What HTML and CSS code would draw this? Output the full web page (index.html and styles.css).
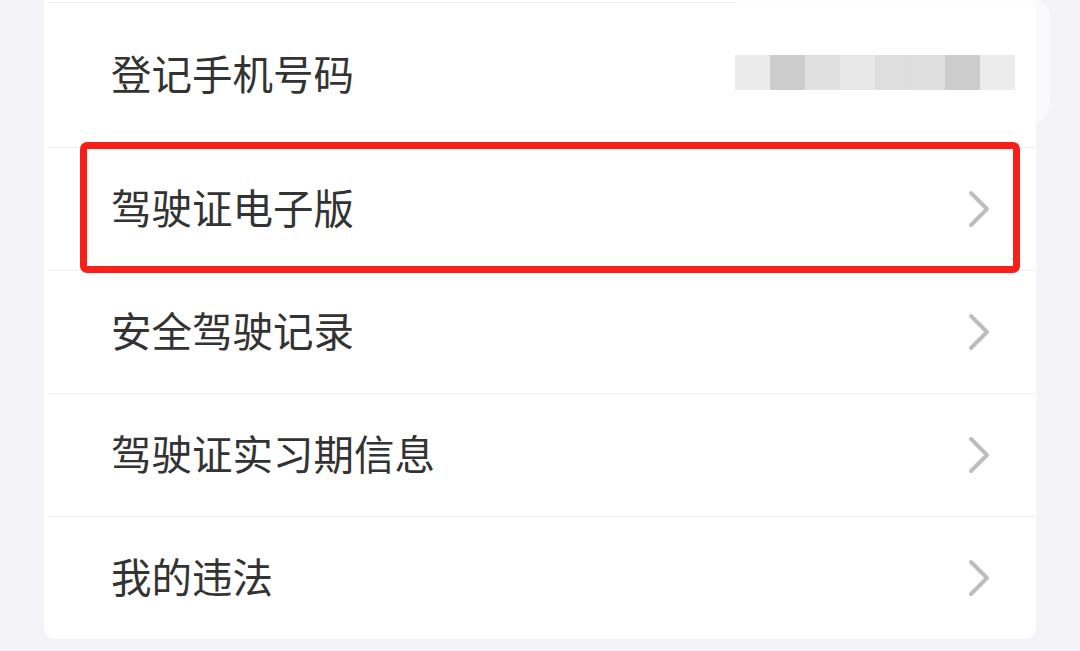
FILE: index.html
```html
<!DOCTYPE html>
<html lang="zh-CN">
<head>
<meta charset="utf-8">
<link rel="stylesheet" href="styles.css">
</head>
<body>
<div class="card">
  <div class="row row-first">
    <span class="label">登记手机号码</span>
  </div>
  <div class="row">
    <span class="label">驾驶证电子版</span>
    <svg class="chev" width="22" height="38" viewBox="0 0 22 38"><polyline points="3,3 19,19 3,35" fill="none" stroke="#bdbdbd" stroke-width="4" stroke-linecap="round" stroke-linejoin="round"/></svg>
  </div>
  <div class="row">
    <span class="label">安全驾驶记录</span>
    <svg class="chev" width="22" height="38" viewBox="0 0 22 38"><polyline points="3,3 19,19 3,35" fill="none" stroke="#bdbdbd" stroke-width="4" stroke-linecap="round" stroke-linejoin="round"/></svg>
  </div>
  <div class="row">
    <span class="label">驾驶证实习期信息</span>
    <svg class="chev" width="22" height="38" viewBox="0 0 22 38"><polyline points="3,3 19,19 3,35" fill="none" stroke="#bdbdbd" stroke-width="4" stroke-linecap="round" stroke-linejoin="round"/></svg>
  </div>
  <div class="row">
    <span class="label">我的违法</span>
    <svg class="chev" width="22" height="38" viewBox="0 0 22 38"><polyline points="3,3 19,19 3,35" fill="none" stroke="#bdbdbd" stroke-width="4" stroke-linecap="round" stroke-linejoin="round"/></svg>
  </div>

  <div class="mask">
    <div class="mask-strip">
      <span class="px p1"></span><span class="px p2"></span><span class="px p3"></span><span class="px p4"></span>
      <span class="px p5"></span><span class="px p6"></span><span class="px p7"></span><span class="px p8"></span>
    </div>
  </div>
  <div class="highlight"></div>
</div>
</body>
</html>
```
FILE: styles.css
```css
html, body {
  margin: 0;
  padding: 0;
}
body {
  background: #f3f3f8;
  width: 1080px;
  height: 651px;
  overflow: hidden;
  font-family: "Noto Sans CJK SC", "Noto Sans", sans-serif;
}
.card {
  position: relative;
  margin-left: 44px;
  width: 992px;
  padding-top: 2px;
  background: #ffffff;
  border-radius: 0 0 10px 10px;
  display: flex;
  flex-direction: column;
}
.row {
  height: 122px;
  margin-left: 4px;
  border-top: 1px solid #efeff2;
  display: flex;
  align-items: center;
  justify-content: space-between;
  padding: 0 46px 0 63px;
}
.row-first {
  height: 144px;
}
.label {
  font-size: 40.5px;
  color: #333333;
  line-height: 1;
  margin-top: -4px;
}
.chev {
  display: block;
}
.mask {
  position: absolute;
  left: 691px;
  top: 0;
  width: 315px;
  height: 125px;
  background: rgba(255, 255, 255, 0.55);
  border-radius: 0 16px 22px 0;
  display: flex;
  align-items: flex-start;
}
.mask-strip {
  display: flex;
  margin-top: 55px;
}
.px {
  display: block;
  width: 35px;
  height: 35px;
}
.p1 { background: #ebebeb; }
.p2 { background: #cccccc; }
.p3 { background: #e0e0e0; }
.p4 { background: #e8e8e8; }
.p5 { background: #dedede; }
.p6 { background: #dfdfdf; }
.p7 { background: #cccccc; }
.p8 { background: #ececec; }
.highlight {
  position: absolute;
  left: 36px;
  top: 142px;
  width: 940px;
  height: 131px;
  box-sizing: border-box;
  border: 7px solid #f71f17;
  border-radius: 7px;
}
```
